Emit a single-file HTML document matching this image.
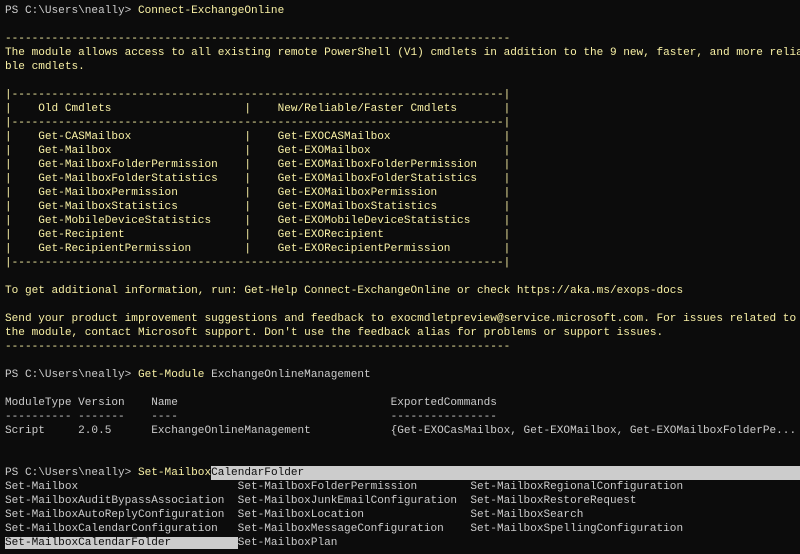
<!DOCTYPE html>
<html><head><meta charset="utf-8"><style>
html,body{margin:0;padding:0;background:#0c0c0c;width:800px;height:554px;overflow:hidden}
pre{margin:0;padding:4px 0 0 5px;font-family:"Liberation Mono","DejaVu Sans Mono",monospace;font-size:11.08px;line-height:14px;color:#cccccc;white-space:pre}
.y{color:#f9f1a5}
.h{background:#cccccc;color:#0c0c0c}
.hl{background:#cccccc;color:#0c0c0c;display:inline-block;width:600px;height:14px;vertical-align:top}
</style></head><body><pre>PS C:\Users\neally&gt; <span class="y">Connect-ExchangeOnline</span>

<span class="y">----------------------------------------------------------------------------
The module allows access to all existing remote PowerShell (V1) cmdlets in addition to the 9 new, faster, and more relia
ble cmdlets.

|--------------------------------------------------------------------------|
|    Old Cmdlets                    |    New/Reliable/Faster Cmdlets       |
|--------------------------------------------------------------------------|
|    Get-CASMailbox                 |    Get-EXOCASMailbox                 |
|    Get-Mailbox                    |    Get-EXOMailbox                    |
|    Get-MailboxFolderPermission    |    Get-EXOMailboxFolderPermission    |
|    Get-MailboxFolderStatistics    |    Get-EXOMailboxFolderStatistics    |
|    Get-MailboxPermission          |    Get-EXOMailboxPermission          |
|    Get-MailboxStatistics          |    Get-EXOMailboxStatistics          |
|    Get-MobileDeviceStatistics     |    Get-EXOMobileDeviceStatistics     |
|    Get-Recipient                  |    Get-EXORecipient                  |
|    Get-RecipientPermission        |    Get-EXORecipientPermission        |
|--------------------------------------------------------------------------|

To get additional information, run: Get-Help Connect-ExchangeOnline or check https://aka.ms/exops-docs

Send your product improvement suggestions and feedback to exocmdletpreview@service.microsoft.com. For issues related to
the module, contact Microsoft support. Don't use the feedback alias for problems or support issues.
----------------------------------------------------------------------------</span>

PS C:\Users\neally&gt; <span class="y">Get-Module</span> ExchangeOnlineManagement

ModuleType Version    Name                                ExportedCommands
---------- -------    ----                                ----------------
Script     2.0.5      ExchangeOnlineManagement            {Get-EXOCasMailbox, Get-EXOMailbox, Get-EXOMailboxFolderPe...


PS C:\Users\neally&gt; <span class="y">Set-Mailbox</span><span class="hl">CalendarFolder</span>
Set-Mailbox                        Set-MailboxFolderPermission        Set-MailboxRegionalConfiguration
Set-MailboxAuditBypassAssociation  Set-MailboxJunkEmailConfiguration  Set-MailboxRestoreRequest
Set-MailboxAutoReplyConfiguration  Set-MailboxLocation                Set-MailboxSearch
Set-MailboxCalendarConfiguration   Set-MailboxMessageConfiguration    Set-MailboxSpellingConfiguration
<span class="h">Set-MailboxCalendarFolder          </span>Set-MailboxPlan
</pre></body></html>
